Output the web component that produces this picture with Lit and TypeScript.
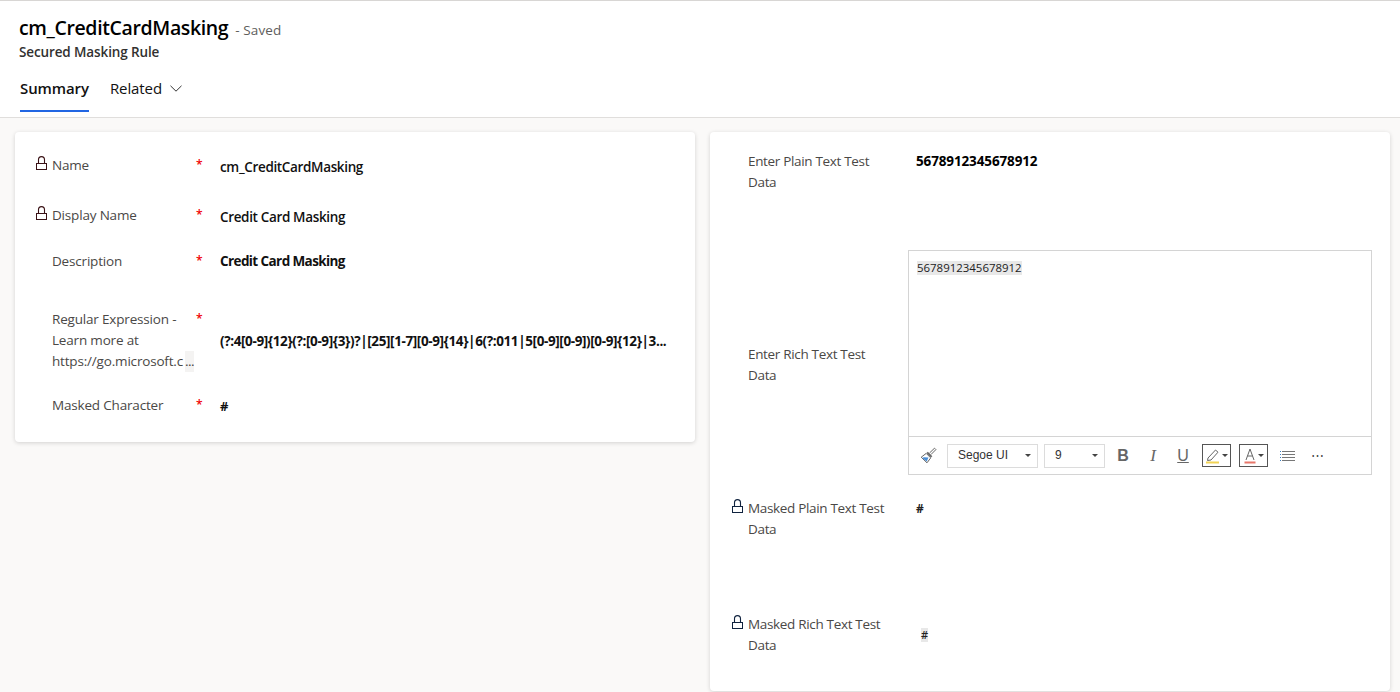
import { LitElement, html, css } from "lit";
import { customElement } from "lit/decorators.js";

const lock = (color: string) => html`<svg class="lock" width="12" height="15" viewBox="0 0 12 15" fill="none">
  <path d="M2.500 7V3.800C2.500 1.800 3.800.6 5.500.6S8.500 1.800 8.500 3.800V7" stroke="${color}" stroke-width="1.100"/>
  <rect x=".5" y="7.500" width="10" height="6" stroke="${color}" stroke-width="1" shape-rendering="crispEdges"/>
</svg>`;

@customElement("app-root")
export class AppRoot extends LitElement {
  static styles = css`
    :host { display: block; height: 692px; overflow: hidden; background: #faf9f8; color: #323130;
      font-family: "Open Sans", "Noto Sans", sans-serif; font-size: 14px; }
    * { box-sizing: border-box; }
    header { height: 118px; background: #fff; border-top: 1px solid #d8d6d4; border-bottom: 1px solid #e0dedc; padding: 0 19px; }
    .titleline { display: flex; align-items: baseline; gap: 7px; padding-top: 13px; height: 40px; }
    h1 { margin: 0; font-size: 19.5px; line-height: 28px; font-weight: 600; color: #000; letter-spacing: -0.37px; }
    .saved { font-size: 13.5px; color: #605e5c; letter-spacing: 0.1px; }
    .sub { font-size: 13.5px; font-weight: 600; line-height: 20px; color: #323130; letter-spacing: -0.12px; margin-top: 1px; }
    .tabs { display: flex; gap: 21px; margin-top: 15px; padding-left: 1px; }
    .tab { height: 35px; line-height: 22px; font-size: 15px; color: #111; display: flex; align-items: flex-start; gap: 8px; letter-spacing: -0.1px; }
    .tab.on { font-weight: 600; border-bottom: 2px solid #2266e3; letter-spacing: -0.1px; }
    .tab svg { margin-top: 8px; }
    main { display: grid; grid-template-columns: 680px 680px; gap: 15px; padding: 14px 0 0 15px; align-items: start; }
    .card { background: #fff; border-radius: 4px; box-shadow: 0 1px 4px rgba(0,0,0,.16); }
    .left { height: 310px; padding-top: 23px; }
    .right { height: 559px; padding-top: 19px; }
    .row { display: grid; grid-template-columns: 37px 144px 24px 1fr; align-items: start; line-height: 21px; font-size: 13.5px; }
    .lockc { padding: 1px 0 0 21px; display: flex; }
    .lockc svg { flex: none; }
    .label { color: #4a4846; letter-spacing: -0.18px; }
    .req { color: #f00000; font-size: 12px; line-height: 19px; font-weight: 600; }
    .value { color: #111; font-weight: 600; white-space: nowrap; padding-right: 26px; }
    .r1 { height: 50px; } .r2 { height: 46px; } .r3 { height: 58px; } .r4 { height: 86px; }
    .r1 .value, .r2 .value { padding-top: 2px; letter-spacing: -0.35px; }
    .r3 .value { font-weight: 700; letter-spacing: -0.6px; }
    .r4 .value { padding-top: 22px; font-weight: 700; letter-spacing: -0.39px; }
    .hash { font-size: 13px; font-weight: 700; padding-top: 1px; letter-spacing: 0; }
    .dots { background: #f4f3f2; letter-spacing: -0.6px; display: inline-block; width: 9px; line-height: 21px; height: 21px; vertical-align: top; margin-left: 2px; }
    .rrow { display: grid; grid-template-columns: 38px 160px 1fr; line-height: 21px; font-size: 13.5px; padding-right: 18px; align-items: start; }
    .rlock { padding: 1px 0 0 22px; display: flex; }
    .rrow .label { letter-spacing: -0.33px; }
    .rrow .v { padding-left: 8px; font-weight: 700; color: #000; font-size: 13.5px; letter-spacing: -0.13px; }
    .plain { height: 99px; }
    .rich { height: 225px; align-items: center; }
    .rich .label { padding-top: 4px; }
    .mplain { height: 116px; margin-top: 23px; }
    .mrich { height: 60px; }
    .editor { border: 1px solid #d4d4d4; height: 225px; display: flex; flex-direction: column; }
    .area { flex: 1; padding: 7px 8px; border-bottom: 1px solid #d4d4d4; line-height: 18px; }
    .mono { font-size: 11.45px; background: #e8e8e8; color: #222; display: inline-block; line-height: 14px; vertical-align: top; margin-top: 3px; }
    .tools { height: 37px; display: flex; align-items: center; padding-left: 11px; }
    .sel { border: 1px solid #dcdcdc; height: 24px; font-family: "Liberation Sans", sans-serif; font-size: 12px; color: #333; display: flex; align-items: center; justify-content: space-between; padding: 0 6px 0 10px; flex: none; }
    .caret { width: 0; height: 0; border-left: 3px solid transparent; border-right: 3px solid transparent; border-top: 3px solid #444; }
    .s1 { width: 91px; margin-left: 10px; } .s2 { width: 61px; margin-left: 6px; }
    .ti { width: 30px; height: 24px; display: flex; align-items: center; justify-content: center; color: #666; font-size: 15px; flex: none; }
    .b { font-family: "Liberation Sans", sans-serif; font-weight: 700; font-size: 16px; margin-left: 3px; }
    .i { font-style: italic; font-family: "Liberation Serif", serif; font-size: 17px; }
    .u { font-family: "Liberation Sans", sans-serif; text-decoration: underline; font-size: 16px; }
    .box { border: 1px solid #555; width: 29px; height: 23px; display: flex; align-items: center; justify-content: center; gap: 1px; flex: none; }
    .h1 { margin-left: 4px; } .h2 { margin-left: 8px; }
    .list { margin-left: 12px; flex: none; }
    .more { margin-left: 15px; font-size: 13px; color: #444; letter-spacing: 1px; font-family: "Liberation Sans", sans-serif; }
    .mhash { padding-left: 8px; font-size: 12px; font-weight: 700; color: #222; }
    .rhash { margin: 14px 0 0 13px; font-size: 11px; font-weight: 600; background: #e8e8e8; display: inline-block; width: 7px; text-align: center; line-height: 14px; color: #222; }
  `;

  private field(cls: string, locked: boolean, label: unknown, value: unknown, vcls = "") {
    return html`<div class="row ${cls}">
      <div class="lockc">${locked ? lock("#3a1216") : ""}</div>
      <div class="label">${label}</div>
      <div class="req">*</div>
      <div class="value ${vcls}">${value}</div>
    </div>`;
  }

  render() {
    return html`
      <header>
        <div class="titleline"><h1>cm_CreditCardMasking</h1><span class="saved">- Saved</span></div>
        <div class="sub">Secured Masking Rule</div>
        <div class="tabs">
          <div class="tab on">Summary</div>
          <div class="tab">Related
            <svg width="12" height="7" viewBox="0 0 12 7" fill="none"><path d="M.5.8 6 6.200 11.500.8" stroke="#333" stroke-width="1"/></svg>
          </div>
        </div>
      </header>
      <main>
        <section class="card left">
          ${this.field("r1", true, "Name", "cm_CreditCardMasking")}
          ${this.field("r2", true, "Display Name", "Credit Card Masking")}
          ${this.field("r3", false, "Description", "Credit Card Masking")}
          ${this.field("r4", false, html`Regular Expression -<br />Learn more at<br />https://go.microsoft.c<span class="dots">...</span>`,
            "(?:4[0-9]{12}(?:[0-9]{3})?|[25][1-7][0-9]{14}|6(?:011|5[0-9][0-9])[0-9]{12}|3...")}
          ${this.field("r5", false, "Masked Character", "#", "hash")}
        </section>
        <section class="card right">
          <div class="rrow plain"><div></div><div class="label">Enter Plain Text Test<br />Data</div><div class="v">5678912345678912</div></div>
          <div class="rrow rich"><div></div><div class="label">Enter Rich Text Test<br />Data</div>
            <div class="editor">
              <div class="area"><span class="mono">5678912345678912</span></div>
              <div class="tools">
                <svg width="17" height="17" viewBox="0 0 17 17" fill="none">
                  <path d="M9.500 6 14.500 1.200l1.400 1.400L11 7.500" fill="#fff" stroke="#666"/>
                  <path d="M7.800 4.800 12.300 9.300l-1.300 1.300L6.500 6.100z" fill="#666"/>
                  <path d="M6.200 6.400 1.200 10.200l5.800 5.600 3.700-4.900z" fill="#fff" stroke="#666"/>
                  <path d="M3.800 10.200 8.500 10.600l-1.800 4L2.200 11z" fill="#4a8fd8"/>
                </svg>
                <div class="sel s1">Segoe UI<span class="caret"></span></div>
                <div class="sel s2">9<span class="caret"></span></div>
                <div class="ti b">B</div><div class="ti i">I</div><div class="ti u">U</div>
                <div class="box h1">
                  <svg width="16" height="17" viewBox="0 0 16 17" fill="none"><path d="M3 11 10.500 3l2.500 2.200L6 13l-3.500.5z" stroke="#666"/><rect x="1" y="14.500" width="13" height="2" fill="#f2d354"/></svg><span class="caret"></span>
                </div>
                <div class="box h2">
                  <svg width="14" height="17" viewBox="0 0 14 17" fill="none"><path d="M3 13 7 2l4 11M4.500 9h5" stroke="#666"/><rect x="1.500" y="14.500" width="11" height="2" fill="#e8776a"/></svg><span class="caret"></span>
                </div>
                <svg class="list" width="16" height="12" viewBox="0 0 16 12"><path d="M2 1.500h13M2 4.500h13M2 7.500h13M2 10.500h13" stroke="#777"/><path d="M0 1.500h1M0 4.500h1M0 7.500h1M0 10.500h1" stroke="#3b7fc4"/></svg>
                <div class="more">⋯</div>
              </div>
            </div>
          </div>
          <div class="rrow mplain"><div class="rlock">${lock("#10233f")}</div><div class="label">Masked Plain Text Test<br />Data</div><div class="mhash">#</div></div>
          <div class="rrow mrich"><div class="rlock">${lock("#10233f")}</div><div class="label">Masked Rich Text Test<br />Data</div><div><span class="rhash">#</span></div></div>
        </section>
      </main>
    `;
  }
}
